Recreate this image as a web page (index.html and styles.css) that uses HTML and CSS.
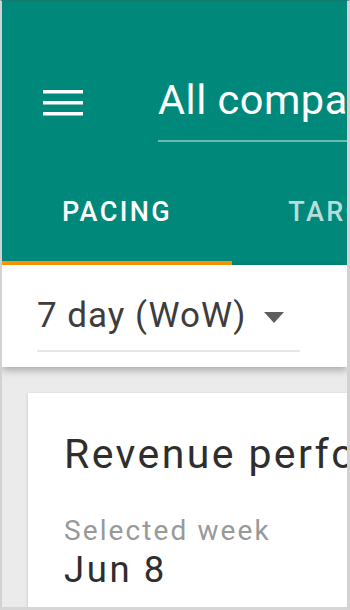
FILE: index.html
```html
<!DOCTYPE html>
<html lang="en">
<head>
    <meta charset="UTF-8">
    <meta name="viewport" content="width=device-width, initial-scale=1.0">
    <title>Pacing</title>
    <link rel="stylesheet" href="styles.css">
</head>
<body>

    <div class="app">
        <header class="appbar">
            <div class="toolbar">
                <svg class="menu-icon" width="40" height="26" viewBox="0 0 40 26">
                    <rect x="0" y="0" width="40" height="3.5"/>
                    <rect x="0" y="11" width="40" height="3.5"/>
                    <rect x="0" y="22" width="40" height="3.5"/>
                </svg>
                <div class="title">All companies</div>
            </div>
            <nav class="tabs">
                <div class="tab active">PACING</div>
                <div class="tab">TARGETS</div>
            </nav>
        </header>

        <div class="filter">
            <div class="select">
                <span class="select-text">7 day (WoW)</span>
                <span class="caret"></span>
            </div>
        </div>

        <main class="content">
            <section class="card">
                <h1 class="card-title">Revenue performance</h1>
                <div class="label">Selected week</div>
                <div class="value">Jun 8</div>
            </section>
        </main>
    </div>

</body>
</html>
```

FILE: styles.css
```css
body {
    margin: 0;
    font-family: Roboto, "Liberation Sans", Arial, sans-serif;
}
.app {
    width: 350px;
    height: 610px;
    box-sizing: border-box;
    border-top: 1px solid #137a6e;
    border-left: 2px solid #d2d2d2;
    border-right: 3px solid #d2d2d2;
    border-bottom: 3px solid #d6d6d6;
    background: #ebebeb;
    overflow: hidden;
}
.appbar {
    background: #00897b;
    color: #fff;
}
.toolbar {
    display: flex;
    align-items: flex-start;
    height: 167px;
    box-sizing: border-box;
    padding: 75px 0 0 41px;
}
.menu-icon {
    fill: #fff;
    margin-top: 14px;
    flex-shrink: 0;
}
.title {
    margin-left: 75px;
    flex: 1;
    font-size: 41.5px;
    line-height: 48px;
    letter-spacing: 0.5px;
    white-space: nowrap;
    overflow: hidden;
    padding-bottom: 16px;
    border-bottom: 2px solid rgba(255, 255, 255, 0.42);
}
.tabs {
    display: flex;
    height: 97px;
    overflow: hidden;
}
.tab {
    width: 230px;
    flex-shrink: 0;
    box-sizing: border-box;
    padding-top: 28px;
    text-align: center;
    font-size: 27px;
    font-weight: 500;
    line-height: 32px;
    letter-spacing: 2.4px;
    color: rgba(255, 255, 255, 0.72);
    white-space: nowrap;
}
.tab + .tab {
    padding-left: 16px;
}
.tab.active {
    color: #fff;
    border-bottom: 4px solid #ff9800;
}
.filter {
    position: relative;
    z-index: 1;
    background: #fff;
    padding: 31px 0 15px 35px;
    box-shadow: 0 3px 8px rgba(0, 0, 0, 0.3);
}
.select {
    display: flex;
    align-items: flex-start;
    width: 263px;
    padding-bottom: 14px;
    border-bottom: 2px solid #e6e6e6;
}
.select-text {
    font-size: 35px;
    line-height: 40px;
    letter-spacing: 1px;
    color: #3d3d3d;
    white-space: nowrap;
}
.caret {
    margin: 16px 0 0 18px;
    width: 0;
    height: 0;
    border-left: 10.5px solid transparent;
    border-right: 10.5px solid transparent;
    border-top: 11px solid #5e5e5e;
}
.content {
    padding: 26px 0 0 26px;
}
.card {
    background: #fff;
    height: 260px;
    padding: 37px 0 0 36px;
    box-shadow: 0 1px 3px rgba(0, 0, 0, 0.18);
    white-space: nowrap;
    overflow: hidden;
}
.card-title {
    margin: 0;
    font-size: 41px;
    font-weight: 400;
    line-height: 48px;
    letter-spacing: 2.4px;
    color: #2e2e2e;
}
.label {
    margin-top: 37px;
    font-size: 28px;
    line-height: 32px;
    letter-spacing: 2.1px;
    color: #999;
}
.value {
    margin-top: 3px;
    font-size: 36.5px;
    line-height: 40px;
    letter-spacing: 2.6px;
    color: #2e2e2e;
}
```
